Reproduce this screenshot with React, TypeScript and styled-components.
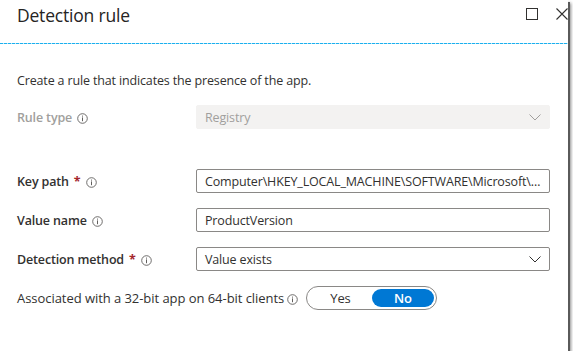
import React from "react";
import styled, { createGlobalStyle } from "styled-components";

const GlobalStyle = createGlobalStyle`
  html, body {
    margin: 0;
    padding: 0;
    background: #fff;
  }
  body {
    font-family: "Open Sans", "Noto Sans", "Liberation Sans", sans-serif;
    color: #323130;
  }
`;

const InfoIcon = () => (
    <InfoSvg width="11" height="11" viewBox="0 0 11 11">
        <circle cx="5.5" cy="5.5" r="4.8" fill="none" stroke="#605e5c" strokeWidth="0.9" />
        <rect x="5" y="2.6" width="1" height="1" fill="#605e5c" />
        <rect x="5" y="4.4" width="1" height="3.8" fill="#605e5c" />
    </InfoSvg>
);

const Chevron = ({ muted }: { muted?: boolean }) => (
    <svg width="12" height="7" viewBox="0 0 12 7">
        <polyline
            points="0.5,0.5 6,6 11.5,0.5"
            fill="none"
            stroke={muted ? "#a19f9d" : "#323130"}
            strokeWidth="1"
        />
    </svg>
);

export default function App() {
    const [is32, setIs32] = React.useState(false);
    return (
        <>
            <GlobalStyle />
            <Frame>
                <Header>
                    <Title>Detection rule</Title>
                    <Controls>
                        <svg width="12" height="12" viewBox="0 0 12 12">
                            <rect x="0.5" y="0.5" width="11" height="11" fill="none" stroke="#323130" strokeWidth="1" />
                        </svg>
                        <svg width="12" height="12" viewBox="0 0 12 12">
                            <path d="M0.5 0.5 L11.5 11.5 M11.5 0.5 L0.5 11.5" stroke="#323130" strokeWidth="1.1" />
                        </svg>
                    </Controls>
                </Header>
                <Divider />
                <Body>
                    <Intro>Create a rule that indicates the presence of the app.</Intro>
                    <Form>
                        <Label disabled>
                            Rule type <InfoIcon />
                        </Label>
                        <Select disabled>
                            <span>Registry</span>
                            <Chevron muted />
                        </Select>

                        <Spacer />

                        <Label>
                            Key path <Required>*</Required> <InfoIcon />
                        </Label>
                        <Field>
                            <Ellipsis>
                                Computer\HKEY_LOCAL_MACHINE\SOFTWARE\Microsoft\Windows\CurrentVersion\Uninstall
                            </Ellipsis>
                        </Field>

                        <Label>
                            Value name <InfoIcon />
                        </Label>
                        <Field>ProductVersion</Field>

                        <Label>
                            Detection method <Required>*</Required> <InfoIcon />
                        </Label>
                        <Select>
                            <span>Value exists</span>
                            <Chevron />
                        </Select>
                    </Form>
                    <ToggleRow>
                        <Plain>Associated with a 32-bit app on 64-bit clients</Plain>
                        <InfoIcon />
                        <Toggle>
                            <ToggleOption active={is32} onClick={() => setIs32(true)}>
                                Yes
                            </ToggleOption>
                            <ToggleOption active={!is32} onClick={() => setIs32(false)}>
                                No
                            </ToggleOption>
                        </Toggle>
                    </ToggleRow>
                </Body>
            </Frame>
        </>
    );
}

const Frame = styled.div`
    width: 568px;
    height: 351px;
    background: #fff;
    box-shadow: 2px 2px 0 #5a5a5a, 3px 3px 3px rgba(0, 0, 0, 0.45);
    overflow: hidden;
`;

const Header = styled.div`
    height: 43px;
    display: flex;
    align-items: center;
    justify-content: space-between;
    padding: 0 0 0 17px;
`;

const Divider = styled.div`
    height: 1px;
    background-color: #1cb0ee;
    background-image: repeating-linear-gradient(90deg, transparent 0 3px, rgba(255, 255, 255, 0.7) 3px 4px);
`;

const Title = styled.div`
    font-size: 17.5px;
    letter-spacing: -0.2px;
    margin-top: -13px;
    color: #252423;
`;

const Controls = styled.div`
    display: flex;
    align-items: center;
    gap: 18px;
    margin-top: -15px;
`;

const Body = styled.div`
    padding: 28px 18px 0 17px;
    font-size: 12.5px;
    letter-spacing: -0.15px;
`;

const Intro = styled.div`
    line-height: 18px;
`;

const Form = styled.div`
    margin-top: 15px;
    display: grid;
    grid-template-columns: 179px 354px;
    row-gap: 15px;
    align-items: center;
`;

const Spacer = styled.div`
    grid-column: 1 / -1;
    height: 10px;
`;

const Label: any = styled.div`
    font-weight: 600;
    display: flex;
    align-items: center;
    gap: 5px;
    color: ${(props: any) => (props.disabled ? "#a19f9d" : "#323130")};
`;

const Required = styled.span`
    color: #a4262c;
    font-weight: 700;
`;

const InfoSvg = styled.svg`
    flex: none;
    margin-top: 2px;
`;

const Field = styled.div`
    box-sizing: border-box;
    height: 24px;
    border: 1px solid #8a8886;
    border-radius: 2px;
    padding: 0 8px;
    display: flex;
    align-items: center;
    min-width: 0;
`;

const Ellipsis = styled.span`
    overflow: hidden;
    white-space: nowrap;
    text-overflow: ellipsis;
`;

const Select: any = styled(Field)`
    justify-content: space-between;
    ${(props: any) =>
        props.disabled
            ? `
        background: #f3f2f1;
        border-color: #f3f2f1;
        color: #a19f9d;
    `
            : ``}
`;

const ToggleRow = styled.div`
    margin-top: 15px;
    display: flex;
    align-items: center;
    gap: 3px;
`;

const Plain = styled.span`
    font-size: 13px;
    letter-spacing: -0.05px;
`;

const Toggle = styled.div`
    box-sizing: border-box;
    margin-left: 5px;
    width: 131px;
    height: 24px;
    border: 1px solid #8a8886;
    border-radius: 12px;
    display: flex;
    padding: 2px;
`;

const ToggleOption: any = styled.div`
    flex: 1;
    border-radius: 10px;
    display: flex;
    align-items: center;
    justify-content: center;
    cursor: pointer;
    font-size: 13px;
    background: ${(props: any) => (props.active ? "#0078d4" : "transparent")};
    color: ${(props: any) => (props.active ? "#fff" : "#323130")};
    font-weight: ${(props: any) => (props.active ? 600 : 400)};
`;
